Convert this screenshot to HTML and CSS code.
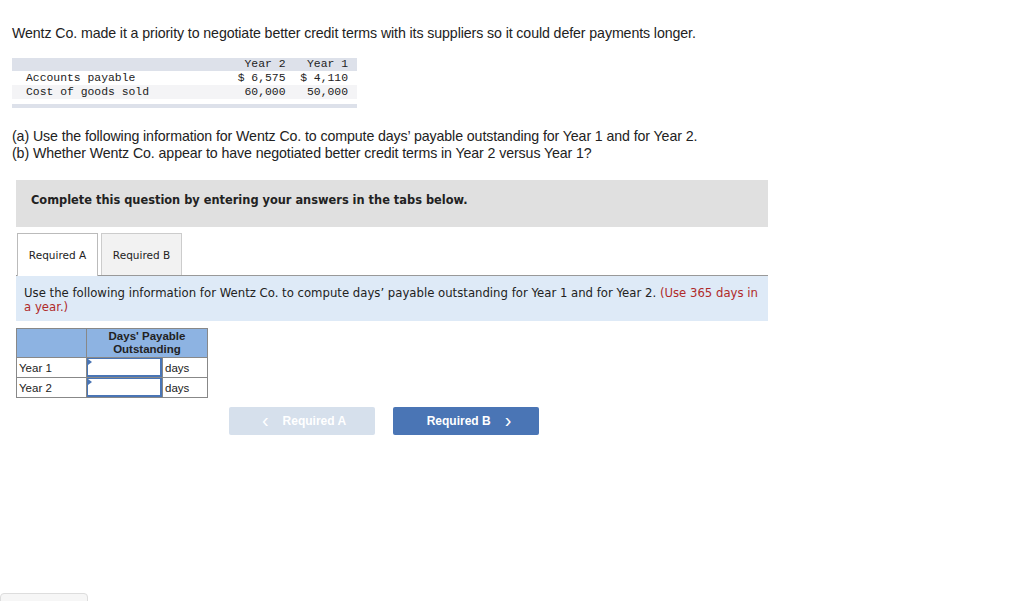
FILE: index.html
```html
<!DOCTYPE html>
<html lang="en">
<head>
  <meta charset="UTF-8">
  <title>Wentz Co. - Days' Payable Outstanding</title>
  <link rel="stylesheet" href="styles.css">
</head>
<body>

<p class="intro">Wentz Co. made it a priority to negotiate better credit terms with its suppliers so it could defer payments longer.</p>

<!-- Data table -->
<table class="data">
  <tr class="data-head">
    <td></td>
    <td class="num">Year 2</td>
    <td class="num">Year 1</td>
  </tr>
  <tr>
    <td class="label">Accounts payable</td>
    <td class="num">$ 6,575</td>
    <td class="num">$ 4,110</td>
  </tr>
  <tr class="alt">
    <td class="label">Cost of goods sold</td>
    <td class="num">60,000</td>
    <td class="num">50,000</td>
  </tr>
</table>
<div class="data-foot"></div>

<p class="parts">
  (a) Use the following information for Wentz Co. to compute days’ payable outstanding for Year 1 and for Year 2.<br>
  (b) Whether Wentz Co. appear to have negotiated better credit terms in Year 2 versus Year 1?
</p>

<div class="question">
  <div class="banner">Complete this question by entering your answers in the tabs below.</div>

  <div class="tabs">
    <div class="tab active">Required A</div>
    <div class="tab">Required B</div>
  </div>

  <div class="instructions">
    <p>Use the following information for Wentz Co. to compute days’ payable outstanding for Year 1 and for Year 2. <span class="hint">(Use 365 days in</span><br><span class="hint">a year.)</span></p>
  </div>

  <table class="answer">
    <tr class="answer-head">
      <td></td>
      <td colspan="2">Days' Payable<br>Outstanding</td>
    </tr>
    <tr>
      <td class="row-label">Year 1</td>
      <td class="cell-input"><div class="input"></div></td>
      <td class="unit">days</td>
    </tr>
    <tr>
      <td class="row-label">Year 2</td>
      <td class="cell-input"><div class="input"></div></td>
      <td class="unit">days</td>
    </tr>
  </table>

  <div class="nav">
    <button class="nav-btn prev" disabled><span class="arrow">&lsaquo;</span>Required A</button>
    <button class="nav-btn next">Required B<span class="arrow">&rsaquo;</span></button>
  </div>
</div>

<div class="corner-tab"></div>

</body>
</html>
```

FILE: styles.css
```css
* { box-sizing: border-box; margin: 0; padding: 0; }
body {
  font-family: 'Liberation Sans', Arial, sans-serif;
  background: #fff;
  color: #222;
  overflow: hidden;
  height: 601px;
  position: relative;
}

.intro {
  font-size: 14.2px;
  line-height: 16px;
  margin: 25px 0 0 12px;
  letter-spacing: -0.1px;
}

/* data table */
.data {
  margin: 17px 0 0 12px;
  width: 345px;
  border-collapse: collapse;
  font-family: 'Liberation Mono', 'Courier New', monospace;
  font-size: 11.4px;
  color: #222;
}
.data td {
  height: 14px;
  line-height: 14px;
  padding: 0;
}
.data-head td { background: #dde1ea; height: 13px; line-height: 13px; }
.data .alt td { background: #f4f4f6; }
.data .label { padding-left: 14px; width: 220px; }
.data .num { text-align: right; padding-right: 9px; }
.data-foot {
  margin: 5px 0 0 12px;
  width: 345px;
  height: 4px;
  background: #dde1ea;
}

.parts {
  font-size: 14.2px;
  line-height: 17px;
  margin: 20px 0 0 12px;
  letter-spacing: -0.1px;
}

/* question area */
.question {
  margin: 18px 0 0 16px;
  width: 752px;
  font-family: 'DejaVu Sans', Verdana, sans-serif;
}
.banner {
  background: #e0e0e0;
  height: 47px;
  padding: 13px 0 0 15px;
  font-size: 11.4px;
  font-weight: bold;
  color: #222;
}

.tabs {
  display: flex;
  gap: 3px;
  margin-top: 6px;
  padding-left: 1px;
  border-bottom: 1px solid #999;
  height: 43px;
}
.tab {
  width: 81px;
  height: 42px;
  border: 1px solid #ccc;
  border-bottom: none;
  background: #f2f2f2;
  font-size: 10.5px;
  color: #222;
  display: flex;
  align-items: center;
  justify-content: center;
}
.tab.active {
  background: #fff;
  height: 43px;
  border-color: #bbb;
  border-bottom: none;
}

.instructions {
  background: #deeaf7;
  font-size: 11.7px;
  line-height: 14px;
  padding: 10px 8px 7px 8px;
  color: #222;
}
.hint { color: #b02a2a; }

/* answer table */
.answer {
  margin-top: 7px;
  border-collapse: collapse;
  font-family: 'Liberation Sans', Arial, sans-serif;
  font-size: 11.5px;
  color: #222;
}
.answer td {
  border: 1px solid #888;
  height: 20px;
  padding: 0;
}
.answer-head td {
  background: #8db3e2;
  height: 29px;
  text-align: center;
  font-weight: bold;
  line-height: 13px;
}
.row-label { width: 70px; padding-left: 2px !important; }
.cell-input { width: 76px; }
.unit { width: 45px; padding-left: 2px !important; }
.input {
  height: 19px;
  border: 1px solid #4a75b5;
  border-width: 1px 2px 2px 1px;
  background: #fff;
  position: relative;
}
.input::before {
  content: '';
  position: absolute;
  top: 0;
  left: 0;
  border-left: 4px solid #4a75b5;
  border-top: 3px solid transparent;
  border-bottom: 3px solid transparent;
}

.nav {
  display: flex;
  gap: 18px;
  margin: 9px 0 0 213px;
}
.nav-btn {
  width: 146px;
  height: 28px;
  border: none;
  border-radius: 2px;
  font-family: 'Liberation Sans', Arial, sans-serif;
  font-size: 12px;
  font-weight: bold;
  color: #fff;
  background: #4a75b5;
  display: flex;
  align-items: center;
  justify-content: center;
}
.nav-btn.prev { background: #d6e0ec; padding-left: 4px; }
.nav-btn.prev .arrow { margin: -2px 14px 0 0; }
.nav-btn.next { padding-left: 6px; }
.nav-btn .arrow {
  font-size: 20px;
  font-weight: normal;
  line-height: 20px;
  margin: -2px 0 0 14px;
}

.corner-tab {
  position: absolute;
  left: 0;
  top: 593px;
  width: 88px;
  height: 20px;
  border: 1px solid #ddd;
  border-radius: 4px;
  background: #f6f6f6;
}
```
